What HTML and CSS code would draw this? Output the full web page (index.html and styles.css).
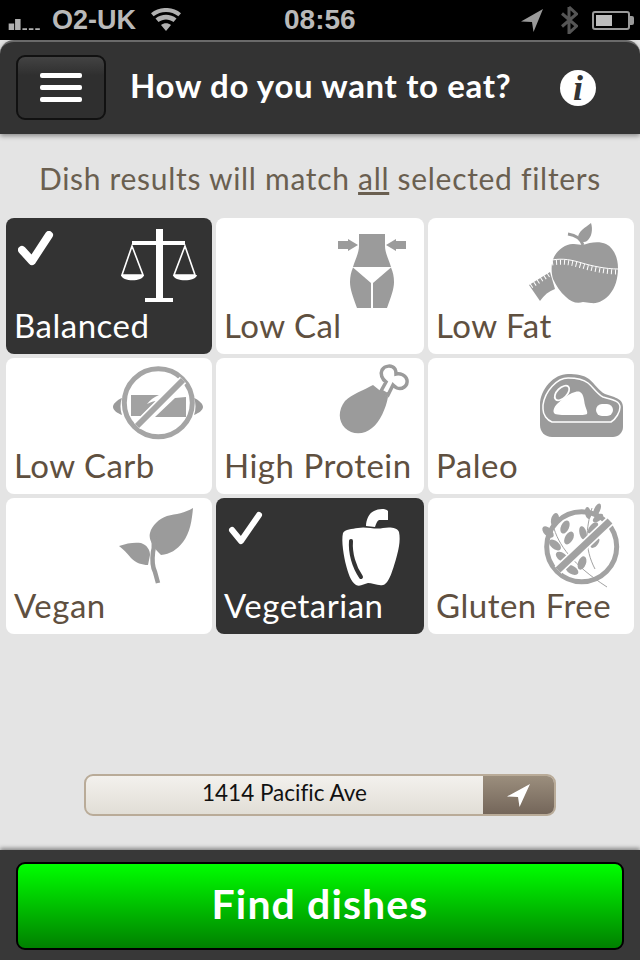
FILE: index.html
```html
<!DOCTYPE html>
<html lang="en">
<head>
  <meta charset="UTF-8">
  <meta name="viewport" content="width=device-width, initial-scale=1.0">
  <title>How do you want to eat?</title>
  <link rel="stylesheet" href="styles.css">
</head>
<body>
  <div class="status-bar">
    <svg class="signal" viewBox="0 0 40 12"><path d="M0 5h6v7H0zM7 0h6v12H7zM15 10h5v2h-5zM22 10h5v2h-5zM29 10h5v2h-5z"/></svg>
    <span class="carrier">O2-UK</span>
    <svg class="wifi" viewBox="0 0 30 23"><path d="M15 23l-5-6c3-2.400 7-2.400 10 0zM7.500 14L4.500 10.500c6-5 15-5 21 0L22.500 14c-4.500-3.500-10.500-3.500-15 0zM2.600 8.300L0 5.200c8.500-7 21.500-7 30 0l-2.600 3.100c-7.200-5.900-17.600-5.900-24.800 0z"/></svg>
    <span class="time">08:56</span>
    <svg class="status-arrow" viewBox="0 0 22 23"><path d="M22 0L0 12.500l11 .5 1.500 10z"/></svg>
    <svg class="bluetooth" viewBox="0 0 17 28"><path d="M8 1v26l7.500-7L1 7.500M8 1l7.500 7L1 20.500" fill="none" stroke="#555" stroke-width="3"/></svg>
    <div class="battery"><div class="battery-level"></div></div>
  </div>

  <header>
    <button class="menu-btn">
      <span></span>
      <span></span>
      <span></span>
    </button>
    <h1>How do you want to eat?</h1>
    <div class="info">i</div>
  </header>

  <main>
    <p class="hint">Dish results will match <u>all</u> selected filters</p>

    <div class="filters">
      <div class="card selected">
        <div class="card-top">
          <svg class="check bold" viewBox="0 0 36 36"><path d="M4 19l10 11L31 4"/></svg>
          <svg class="icon" viewBox="0 0 100 95">
            <path d="M24 21h53v4H24zM48 9h7v69h-7zM37 78h28v4H37z"/>
            <path d="M24 26L14 55h21zM77 26L66 55h21z" fill="none" stroke="#fff" stroke-width="1.600"/>
            <path d="M13 55h23c-1 7-22 7-23 0zM65 55h24c-1 7-23 7-24 0z"/>
          </svg>
        </div>
        <div class="label">Balanced</div>
      </div>

      <div class="card">
        <div class="card-top">
          <svg class="icon" viewBox="0 0 100 95">
            <path d="M39 14h26v12c0 7 4 14 6 21H33c2-7 6-14 6-21z"/>
            <path d="M33 47.500l18 15.500v25H37C33 77 30 69 30 62c0-5 1-10 3-14.500zM71 47.500L53 63v25h14c4-11 7-19 7-26 0-5-1-10-3-14.500z"/>
            <path d="M18 21h10v-2l10 6-10 6v-2H18zM86 21H76v-2l-10 6 10 6v-2h10z"/>
          </svg>
        </div>
        <div class="label">Low Cal</div>
      </div>

      <div class="card">
        <div class="card-top">
          <svg class="icon" viewBox="0 0 100 95">
            <path d="M-1 65l21-13 5 17c-6 2-11 6-15 12z"/>
            <path d="M53 25c7-3 17-4 23-1 8 4 12 14 12 24 0 11-3 20-8 26-5 6-12 10-19 9-3 0-5-1-8-1-6 2-12 0-17-5-6-5-10-12-13-18-2-7-2-16 1-22 4-8 13-14 20-13 3 0 6 1 9 1z"/>
            <path d="M53 25c-2-6-8-10-15-11" fill="none" stroke="#9b9b9b" stroke-width="3"/>
            <path d="M48 18c0-7 7-10 13-15 2 6 1 14-4 18-3 2-7 1-9-3z"/>
            <path class="tape" d="M22 40c11-2 20 0 30 3s24 6 36 6"/>
            <path class="tape-ticks" d="M22 43c11-2 20 0 30 3s24 6 36 6"/>
            <path class="tape-ticks" d="M1 66l20-13"/>
          </svg>
        </div>
        <div class="label">Low Fat</div>
      </div>

      <div class="card">
        <div class="card-top">
          <svg class="icon" viewBox="0 0 100 95">
            <path d="M14 38c-5 2-9 6-9 9 0 3 4 6 9 8-2-5-2-12 0-17zM86 38c5 2 9 6 9 9 0 3-4 6-9 8 2-5 2-12 0-17z"/>
            <path d="M23 35h28c-5 2-9 5-12 9 4-2 7-3 9-3L33 56H23zM47 57l20-19 11-1v20z" fill="#a2a2a2"/>
            <circle cx="50.300" cy="42.700" r="34" fill="none" stroke="#a5a5a5" stroke-width="5"/>
            <path d="M29 66L75 20" stroke="#fff" stroke-width="9"/>
            <path d="M29 66L75 20" stroke="#a5a5a5" stroke-width="6"/>
          </svg>
        </div>
        <div class="label">Low Carb</div>
      </div>

      <div class="card">
        <div class="card-top">
          <svg class="icon" viewBox="0 0 100 95">
            <path d="M61 31l5-9c-4-3-6-8-4-12 3-5 10-5 13-1 1 2 1 5 1 5 4-1 10 1 11 6 1 6-5 10-10 8-2-1-3-2-4-3l-5 10z" fill="#fff" stroke="#9b9b9b" stroke-width="3.500"/>
            <path d="M53 25l15 12c-2 11-8 25-16 31-8 7-20 7-27 0-7-7-7-18 0-27 7-7 19-11 28-16z"/>
          </svg>
        </div>
        <div class="label">High Protein</div>
      </div>

      <div class="card">
        <div class="card-top">
          <svg class="icon" viewBox="0 0 100 95">
            <path d="M10 45c0-16 14-31 28-31 8 0 16 1 21 5 6 5 10 12 16 15 8 3 18 4 18 13v20c0 6-5 10-10 10H22c-7 0-12-5-12-12z"/>
            <path d="M13 45c2-14 14-27 25-27 8 0 15 1 20 5s9 11 15 14c6 2 17 3 17 10 0 5-4 12-9 15H22c-5-2-9-7-9-13z" fill="none" stroke="#fff" stroke-width="1.500"/>
            <path d="M25 54c-3-2-1-7 2-10 5-5 11-9 15-11 3-1 6-2 8-1 4 2 4 9 5 13 1 4 3 7 2 9-1 1-6 1-15 1-6 0-15 0-17-1z" fill="#fff"/>
            <ellipse cx="32" cy="33" rx="9" ry="5" transform="rotate(-45 32 33)" fill="#9b9b9b" stroke="#fff" stroke-width="1.800"/>
            <rect x="66" y="44" width="17" height="12" rx="6" fill="#fff"/>
          </svg>
        </div>
        <div class="label">Paleo</div>
      </div>

      <div class="card">
        <div class="card-top">
          <svg class="icon" viewBox="0 0 100 95">
            <path d="M85 8c-1 12-3 25-10 34-6 8-13 12-22 13-3-3-6-6-8-10-3-4-4-9-3-12 2-8 9-14 17-17 9-2 18-3 26-8z"/>
            <path d="M11 46c8-3 16-4 22-3 6 2 9 7 9 12l-2 10c-6 0-12-2-17-7-4-5-8-9-12-12z"/>
            <path d="M46 36c-1 6 1 10-1 16-1 8-1 14 2 20l3 11" fill="none" stroke="#9b9b9b" stroke-width="4.500"/>
          </svg>
        </div>
        <div class="label">Vegan</div>
      </div>

      <div class="card selected">
        <div class="card-top">
          <svg class="check" viewBox="0 0 36 36"><path d="M4 19l9 11L31 4"/></svg>
          <svg class="icon" viewBox="0 0 100 95">
            <path d="M46 26c0-6 3-13 8-15 4-2 11-3 14 0l0 9h-9c-2 1-3 4-4 7z"/>
            <path d="M38 28c8-2 17 2 25 0 6-1 14-1 16 4 2 9-1 20-3 27-3 10-7 25-13 26-5 1-11-2-15-2-4 1-8 4-12 2-5-3-8-12-10-20-2-8-5-24-3-32 2-4 9-4 15-5z"/>
            <path d="M31 41c-1 12 3 26 10 36" fill="none" stroke="#333" stroke-width="4" stroke-linecap="round"/>
          </svg>
        </div>
        <div class="label">Vegetarian</div>
      </div>

      <div class="card">
        <div class="card-top">
          <svg class="icon" viewBox="0 0 100 95">
            <circle cx="51.700" cy="46.700" r="35" fill="none" stroke="#a2a2a2" stroke-width="5"/>
            <g fill="#a2a2a2">
              <ellipse cx="25" cy="20" rx="4" ry="7" transform="rotate(10 25 20)"/>
              <ellipse cx="18" cy="32" rx="4" ry="7" transform="rotate(-45 18 32)"/>
              <ellipse cx="35" cy="27" rx="4" ry="7" transform="rotate(25 35 27)"/>
              <ellipse cx="25" cy="45" rx="4" ry="7" transform="rotate(-50 25 45)"/>
              <ellipse cx="39" cy="38" rx="4" ry="7" transform="rotate(30 39 38)"/>
              <ellipse cx="32" cy="57" rx="4" ry="7" transform="rotate(-55 32 57)"/>
              <ellipse cx="52" cy="63" rx="4" ry="7" transform="rotate(20 52 63)"/>
              <ellipse cx="42" cy="70" rx="4" ry="7" transform="rotate(-60 42 70)"/>
              <ellipse cx="58" cy="13" rx="3" ry="6" transform="rotate(-10 58 13)"/>
              <ellipse cx="67" cy="10" rx="3" ry="7" transform="rotate(25 67 10)"/>
              <ellipse cx="68" cy="18" rx="3" ry="6" transform="rotate(55 68 18)"/>
              <ellipse cx="53" cy="33" rx="3.500" ry="7" transform="rotate(-15 53 33)"/>
              <ellipse cx="63" cy="28" rx="3.500" ry="7" transform="rotate(40 63 28)"/>
              <ellipse cx="65" cy="43" rx="3" ry="6" transform="rotate(40 65 43)"/>
            </g>
            <path d="M23 25c5 20 20 40 54 62M62 8c-6 20-8 40 3 61" fill="none" stroke="#a2a2a2" stroke-width="1"/>
            <path d="M28 70L80 21" stroke="#fff" stroke-width="10"/>
            <path d="M28 70L80 21" stroke="#a2a2a2" stroke-width="7"/>
          </svg>
        </div>
        <div class="label">Gluten Free</div>
      </div>
    </div>

    <div class="location">
      <div class="location-text">1414 Pacific Ave</div>
      <div class="location-btn">
        <svg viewBox="0 0 23 23"><path d="M23 0L0 12.500l11 .5 1.500 10z"/></svg>
      </div>
    </div>
  </main>

  <footer>
    <button class="find-btn">Find dishes</button>
  </footer>
</body>
</html>
```

FILE: styles.css
```css
* {
  box-sizing: border-box;
}

body {
  margin: 0;
  height: 960px;
  overflow: hidden;
  display: flex;
  flex-direction: column;
  background-color: #e4e4e4;
  font-family: 'Lato', sans-serif;
}

/* Status bar */
.status-bar {
  height: 40px;
  flex-shrink: 0;
  display: flex;
  align-items: center;
  padding-left: 8px;
  background-color: #000;
  color: #b9b9b9;
  font-family: 'Liberation Sans', sans-serif;
  font-weight: bold;
}

.signal {
  width: 38px;
  height: 11px;
  margin-top: 9px;
  fill: #b0b0b0;
}

.carrier {
  font-size: 27px;
  margin-left: 6px;
}

.wifi {
  width: 30px;
  height: 23px;
  margin-left: 15px;
  margin-bottom: 2px;
  fill: #b0b0b0;
}

.time {
  font-size: 28px;
  margin-left: 103px;
}

.status-arrow {
  width: 22px;
  height: 23px;
  margin-left: 165px;
  fill: #9a9a9a;
}

.bluetooth {
  width: 17px;
  height: 28px;
  margin-left: 18px;
}

.battery {
  position: relative;
  width: 38px;
  height: 19px;
  margin-left: 14px;
  border: 2px solid #9a9a9a;
  border-radius: 3px;
  padding: 2px;
}

.battery::after {
  content: "";
  position: absolute;
  right: -6px;
  top: 3px;
  width: 4px;
  height: 9px;
  background-color: #9a9a9a;
  border-radius: 0 2px 2px 0;
}

.battery-level {
  width: 16px;
  height: 11px;
  background-color: #bdbdbd;
}

/* Header */
header {
  height: 94px;
  flex-shrink: 0;
  display: flex;
  align-items: center;
  padding: 0 44px 2px 16px;
  background-color: #333;
  border-top: 2px solid #6a6a6a;
  border-radius: 14px 14px 0 0;
  box-shadow: 0 2px 5px rgba(0, 0, 0, 0.4);
  z-index: 1;
}

.menu-btn {
  width: 90px;
  height: 65px;
  display: flex;
  flex-direction: column;
  align-items: center;
  justify-content: center;
  gap: 7px;
  padding: 0;
  background: linear-gradient(#434343, #2f2f2f 30%);
  border: 2px solid #111;
  border-radius: 9px;
}

.menu-btn span {
  width: 42px;
  height: 5px;
  background-color: #fff;
  border-radius: 2px;
}

h1 {
  flex: 1;
  margin: 0 0 4px 24px;
  font-size: 33px;
  font-weight: 700;
  letter-spacing: 0.65px;
  color: #fff;
  white-space: nowrap;
}

.info {
  width: 36px;
  height: 36px;
  margin-top: 2px;
  border-radius: 50%;
  background-color: #fff;
  color: #333;
  font-family: 'Liberation Serif', serif;
  font-style: italic;
  font-weight: bold;
  font-size: 36px;
  line-height: 36px;
  text-align: center;
}

/* Filters */
main {
  flex: 1;
  display: flex;
  flex-direction: column;
}

.hint {
  margin: 26px 0 22px;
  font-size: 30px;
  letter-spacing: 0.7px;
  line-height: 36px;
  text-align: center;
  color: #6a5f50;
}

.filters {
  display: grid;
  grid-template-columns: 206px 208px 206px;
  grid-auto-rows: 136px;
  gap: 4px;
  padding-left: 6px;
}

.card {
  display: flex;
  flex-direction: column;
  padding-left: 8px;
  background-color: #fff;
  border-radius: 8px;
  color: #5f5040;
}

.card.selected {
  background-color: #333;
  color: #fff;
}

.card-top {
  height: 89px;
  display: flex;
  margin-left: -8px;
}

.icon {
  width: 100px;
  height: 95px;
  margin: 2px 4px 0 auto;
  overflow: visible;
  fill: #9b9b9b;
}

.selected .icon {
  fill: #fff;
}

.tape {
  fill: none;
  stroke: #fff;
  stroke-width: 1;
}

.tape-ticks {
  fill: none;
  stroke: #fff;
  stroke-width: 5;
  stroke-dasharray: 1 3;
}

.check {
  width: 36px;
  height: 36px;
  margin: 13px 0 0 12px;
}

.check path {
  fill: none;
  stroke: #fff;
  stroke-width: 6;
  stroke-linecap: round;
  stroke-linejoin: round;
}

.check.bold path {
  stroke-width: 8;
}

.label {
  font-size: 33px;
  letter-spacing: 0.5px;
  line-height: 36px;
  white-space: nowrap;
}

/* Location */
.location {
  width: 472px;
  height: 42px;
  margin: 140px 0 0 84px;
  display: flex;
  border: 2px solid #b9ab98;
  border-radius: 9px;
  overflow: hidden;
  background: linear-gradient(#f3f1ed, #e1ded6);
}

.location-text {
  flex: 1;
  font-size: 22.500px;
  font-variant-ligatures: none;
  line-height: 34px;
  text-align: center;
  color: #111;
}

.location-btn {
  width: 71px;
  display: flex;
  align-items: center;
  justify-content: center;
  background: linear-gradient(#9b8e7d, #74665a);
}

.location-btn svg {
  width: 23px;
  height: 23px;
  fill: #fff;
}

/* Footer */
footer {
  height: 110px;
  margin-top: auto;
  flex-shrink: 0;
  padding: 12px 16px 10px;
  background-color: #383838;
  box-shadow: 0 -2px 4px rgba(0, 0, 0, 0.4);
}

.find-btn {
  width: 100%;
  height: 88px;
  padding-bottom: 6px;
  background: linear-gradient(#00ff00, #008000);
  border: 2px solid #000;
  border-radius: 9px;
  color: #fff;
  font-family: 'Lato', sans-serif;
  font-size: 41px;
  font-weight: 700;
  letter-spacing: 1.1px;
}
```
